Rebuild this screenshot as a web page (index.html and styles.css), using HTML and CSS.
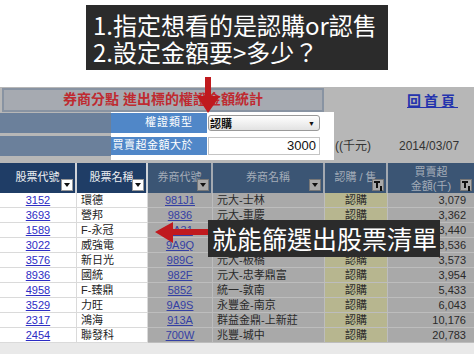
FILE: index.html
```html
<!DOCTYPE HTML>
<html lang="zh-TW">
<head>
	<meta charset="UTF-8">
	<title>券商分點 進出標的權證金額統計</title>
	<link rel="stylesheet" href="styles.css">
</head>
<body>

<div class="note note-top">1.指定想看的是認購or認售<br>2.設定金額要&gt;多少？</div>

<div class="page">
	<div class="title-row">
		<div class="title-box">券商分點 進出標的權證金額統計</div>
		<a class="home" href="javascript:;">回首頁</a>
	</div>

	<div class="form-row">
		<div class="form-dim">
			<div class="dim-bar"></div>
			<div class="dim-bar"></div>
		</div>
		<div class="form-box">
			<div class="label l1">權證類型</div>
			<div class="select"><span>認購</span><span class="caret">▼</span></div>
			<div class="label l2">買賣超金額大於</div>
			<div class="input">3000</div>
		</div>
		<div class="form-meta">
			<span>((千元)</span>
			<span class="date">2014/03/07</span>
		</div>
	</div>

	<table class="grid">
		<colgroup>
			<col style="width:77px"><col style="width:71px"><col style="width:65px">
			<col style="width:112px"><col style="width:63px"><col style="width:86px">
		</colgroup>
		<thead>
			<tr>
				<th class="hl">股票代號<i class="flt down"></i></th>
				<th class="hl">股票名稱<i class="flt down"></i></th>
				<th>券商代號<i class="flt down"></i></th>
				<th>券商名稱<i class="flt down"></i></th>
				<th>認購 / 售<i class="flt funnel"></i></th>
				<th class="two">買賣超<br>金額(千)<i class="flt funnel"></i></th>
			</tr>
		</thead>
		<tbody>
			<tr><td class="hl code"><a href="javascript:;">3152</a></td><td class="hl name">環德</td><td class="code"><a href="javascript:;">981J1</a></td><td class="name">元大-士林</td><td class="kind">認購</td><td class="amt">3,079</td></tr>
			<tr><td class="hl code"><a href="javascript:;">3693</a></td><td class="hl name">營邦</td><td class="code"><a href="javascript:;">9836</a></td><td class="name">元大-重慶</td><td class="kind">認購</td><td class="amt">3,362</td></tr>
			<!-- 這兩列的券商名稱被說明框蓋住 -->
			<tr><td class="hl code"><a href="javascript:;">1589</a></td><td class="hl name">F-永冠</td><td class="code"><a href="javascript:;">9A31</a></td><td class="name"></td><td class="kind"></td><td class="amt">3,440</td></tr>
			<tr><td class="hl code"><a href="javascript:;">3022</a></td><td class="hl name">威強電</td><td class="code"><a href="javascript:;">9A9Q</a></td><td class="name"></td><td class="kind"></td><td class="amt">3,536</td></tr>
			<tr><td class="hl code"><a href="javascript:;">3576</a></td><td class="hl name">新日光</td><td class="code"><a href="javascript:;">989C</a></td><td class="name">元大-板橋</td><td class="kind">認購</td><td class="amt">3,573</td></tr>
			<tr><td class="hl code"><a href="javascript:;">8936</a></td><td class="hl name">國統</td><td class="code"><a href="javascript:;">982F</a></td><td class="name">元大-忠孝鼎富</td><td class="kind">認購</td><td class="amt">3,954</td></tr>
			<tr><td class="hl code"><a href="javascript:;">4958</a></td><td class="hl name">F-臻鼎</td><td class="code"><a href="javascript:;">5852</a></td><td class="name">統一-敦南</td><td class="kind">認購</td><td class="amt">5,433</td></tr>
			<tr><td class="hl code"><a href="javascript:;">3529</a></td><td class="hl name">力旺</td><td class="code"><a href="javascript:;">9A9S</a></td><td class="name">永豐金-南京</td><td class="kind">認購</td><td class="amt">6,043</td></tr>
			<tr><td class="hl code"><a href="javascript:;">2317</a></td><td class="hl name">鴻海</td><td class="code"><a href="javascript:;">913A</a></td><td class="name">群益金鼎-上新莊</td><td class="kind">認購</td><td class="amt">10,176</td></tr>
			<tr><td class="hl code"><a href="javascript:;">2454</a></td><td class="hl name">聯發科</td><td class="code"><a href="javascript:;">700W</a></td><td class="name">兆豐-城中</td><td class="kind">認購</td><td class="amt">20,783</td></tr>
		</tbody>
	</table>
	<div class="page-foot"></div>
</div>

<!-- 指向表單的箭頭 -->
<svg class="arrow-down" width="26" height="40" viewBox="0 0 26 40">
	<polygon points="9,1 15,1 15,20 24,20 12,37 1,20 9,20" fill="#c01a1e"/>
</svg>
<!-- 指向股票清單的箭頭 -->
<svg class="arrow-left" width="62" height="26" viewBox="0 0 62 26">
	<polygon points="5,12 23,2 23,9 60,9 60,15 23,15 23,23" fill="#c01a1e"/>
</svg>
<div class="note note-side">就能篩選出股票清單</div>

</body>
</html>
```

FILE: styles.css
```css
*{
	padding:0;
	margin:0;
	box-sizing:border-box;
}
body{
	width:474px;
	height:354px;
	overflow:hidden;
	position:relative;
	background:#fff;
	font-family:"Liberation Sans","Noto Sans CJK TC",sans-serif;
}
/**說明框**/
.note{
	background:#2b2b2b;
	color:#fff;
	font-family:"Noto Sans CJK TC",sans-serif;
}
.note-top{
	width:302px;
	height:65px;
	margin:5px 0 0 86px;
	padding:6px 0 0 7px;
	font-size:24px;
	line-height:27px;
}
.note-side{
	position:absolute;
	left:208px;
	top:220px;
	width:232px;
	height:37px;
	padding-left:4px;
	font-size:25px;
	line-height:37px;
}
.arrow-down{
	position:absolute;
	left:196px;
	top:76px;
}
.arrow-left{
	position:absolute;
	left:150px;
	top:220px;
}

/**頁面（灰色部分）**/
.page{
	margin-top:17px;
	background:#b7b7b7;
}
.title-row{
	display:flex;
	align-items:center;
	height:25px;
	padding:1px 0 0 2px;
}
.title-box{
	width:322px;
	height:24px;
	border:2px solid #8893a2;
	background:#a6aab1;
	color:#bf2a30;
	font-size:14px;
	font-weight:bold;
	line-height:19px;
	text-align:center;
}
.home{
	margin-left:83px;
	color:#2433ad;
	font-size:14px;
	font-weight:bold;
	letter-spacing:3px;
}

/**查詢條件**/
.form-row{
	display:flex;
	height:48px;
}
.form-dim{
	width:111px;
	padding-top:1px;
	display:flex;
	flex-direction:column;
	gap:3px;
}
.dim-bar{
	height:20px;
	background:#6b809b;
}
.form-box{
	width:223px;
	background:#fff;
	padding-top:1px;
	display:grid;
	grid-template-columns:96px 112px;
	grid-template-rows:20px 18px;
	column-gap:1px;
	row-gap:4px;
	align-content:start;
	align-items:center;
}
.label{
	height:100%;
	background:#5087c8;
	color:#fff;
	text-align:right;
	padding-right:14px;
	font-size:11px;
	letter-spacing:1px;
	line-height:19px;
}
.l2{
	line-height:17px;
	letter-spacing:0.5px;
}
.select{
	height:16px;
	border:1px solid #999;
	border-radius:3px;
	background:linear-gradient(#fff,#e2e2e2);
	display:flex;
	justify-content:space-between;
	align-items:center;
	padding:0 4px 0 1px;
	font-size:11px;
	font-weight:bold;
	color:#111;
}
.caret{
	font-size:7px;
}
.input{
	height:18px;
	border:1px solid #c4c4c4;
	text-align:right;
	padding-right:3px;
	font-size:13px;
	line-height:16px;
	color:#111;
}
.form-meta{
	display:flex;
	align-items:flex-end;
	padding:0 0 7px 1px;
	font-size:12px;
	color:#333;
}
.date{
	margin-left:28px;
}

/**資料表**/
.grid{
	margin-top:3px;
	width:474px;
	table-layout:fixed;
	border-collapse:separate;
	border-spacing:0;
	font-size:11px;
}
.grid th{
	position:relative;
	height:30px;
	padding-top:7px;
	vertical-align:top;
	background:#3b5574;
	color:#a3acb8;
	font-weight:normal;
	line-height:14px;
	border-right:2px solid #a3a9b1;
}
.grid th.hl{
	background:#1f3d66;
	color:#eef0f3;
	border-right-color:#cfd3d8;
}
.grid th.two{
	padding-top:2px;
	border-right:0;
}
.grid td{
	height:14px;
	line-height:14px;
	background:#a9a9a9;
	color:#2a2a2a;
	border-bottom:1px solid #bdbdbd;
	border-right:1px solid #bdbdbd;
	white-space:nowrap;
	overflow:hidden;
}
.grid td.hl{
	background:#fff;
	color:#222;
	border-color:#dadada;
}
.grid td.code{
	text-align:center;
}
.grid td.code a{
	color:#3440a4;
}
.grid td.hl.code a{
	color:#2c2cc4;
}
.grid td.name{
	padding-left:4px;
}
.grid td.kind{
	text-align:center;
	background:#b7b68f;
}
.grid td.amt{
	text-align:right;
	padding-right:8px;
	border-right:0;
}
.page-foot{
	height:12px;
	background:#e9e9e9;
}

/**篩選按鈕**/
.flt{
	position:absolute;
	right:2px;
	bottom:2px;
	width:12px;
	height:12px;
	background:#a9a9a9;
	border:1px solid #777;
}
.grid th.hl .flt{
	background:#fff;
	border-color:#999;
}
.flt.down::after{
	content:"";
	position:absolute;
	left:2px;
	top:3px;
	border-left:3px solid transparent;
	border-right:3px solid transparent;
	border-top:4px solid #111;
}
.flt.funnel::before{
	content:"";
	position:absolute;
	left:1px;
	top:1px;
	width:6px;
	height:2px;
	background:#111;
}
.flt.funnel::after{
	content:"";
	position:absolute;
	left:3px;
	top:3px;
	width:2px;
	height:5px;
	background:#111;
	box-shadow:4px 3px 0 0 #111;
}
```
